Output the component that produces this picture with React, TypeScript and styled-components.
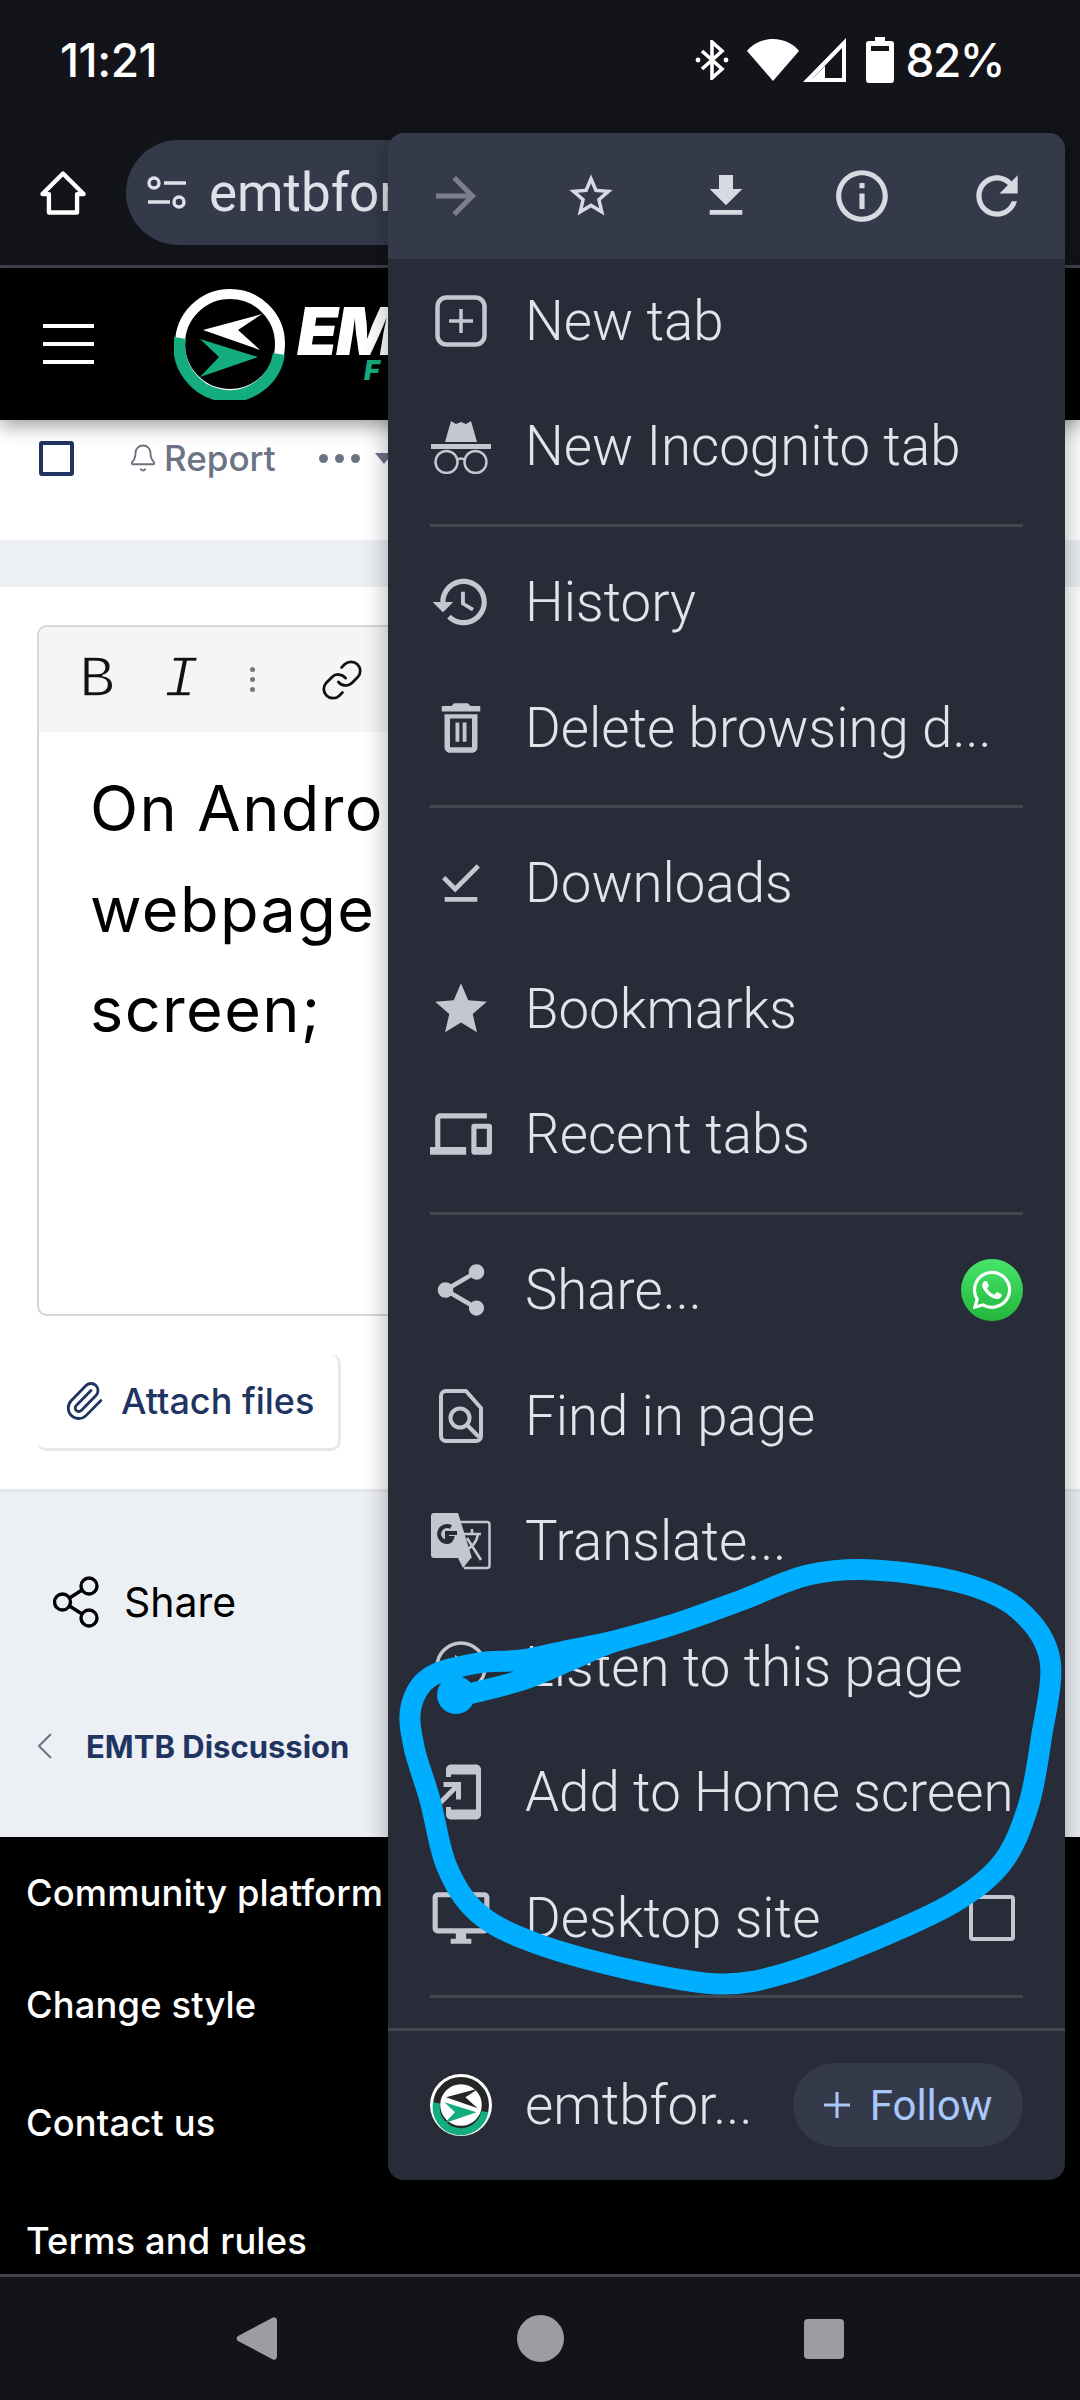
import React from "react";
import styled, { createGlobalStyle } from "styled-components";
import { Bell, Link, Paperclip } from "lucide-react";
import { FaWhatsapp } from "react-icons/fa";

const Global = createGlobalStyle`
  html, body { margin: 0; padding: 0; background: #000; }
  * { box-sizing: border-box; }
`;

const Phone = styled.div`
  position: relative;
  width: 1080px;
  height: 2400px;
  overflow: hidden;
  background: #fff;
  font-family: Inter, "Liberation Sans", sans-serif;
  display: flex;
  flex-direction: column;
`;

const Chrome = styled.header`
  background: #12141a;
  border-bottom: 3px solid #44464f;
  height: 268px;
  flex: none;
`;
const StatusBar = styled.div`
  height: 120px;
  display: flex;
  align-items: center;
  justify-content: space-between;
  padding: 0 76px 0 60px;
  color: #fff;
`;
const Clock = styled.span`
  font-size: 46px;
  font-weight: 500;
  letter-spacing: -0.5px;
`;
const StatusIcons = styled.div`
  display: flex;
  align-items: center;
`;
const Battery = styled.span`
  font-size: 46px;
  font-weight: 500;
  letter-spacing: -1.5px;
  margin-left: 12px;
`;
const Toolbar = styled.div`
  height: 145px;
  display: flex;
  align-items: center;
  padding-left: 37px;
  gap: 37px;
`;
const UrlPill = styled.div`
  height: 105px;
  width: 420px;
  border-radius: 53px;
  background: #343a4a;
  display: flex;
  align-items: center;
  padding-left: 21px;
  gap: 22px;
  color: #dfe1e8;
  font-family: Roboto, sans-serif;
  font-size: 53px;
  white-space: nowrap;
`;

const SiteHeader = styled.div`
  height: 152px;
  flex: none;
  background: #000;
  display: flex;
  align-items: center;
  padding-left: 43px;
  position: relative;
  z-index: 2;
  box-shadow: 0 6px 18px rgba(0, 0, 0, 0.38);
`;
const Burger = styled.div`
  width: 51px;
  display: flex;
  flex-direction: column;
  gap: 14px;
  margin-right: 80px;
`;
const BurgerBar = styled.i`
  display: block;
  height: 4px;
  background: #fff;
`;
const Brand = styled.div`
  display: flex;
  flex-direction: column;
  margin-left: 11px;
  font-style: italic;
  font-weight: 900;
  white-space: nowrap;
`;
const BrandMain = styled.span`
  font-size: 66px;
  line-height: 52px;
  color: #fff;
  letter-spacing: -2px;
`;
const BrandSub = styled.span`
  font-size: 27px;
  line-height: 24px;
  color: #14ad7f;
  margin-left: 67px;
  margin-top: 2px;
`;

const Actions = styled.div`
  height: 120px;
  flex: none;
  display: flex;
  align-items: center;
  padding: 0 0 44px 39px;
  color: #6b7385;
  white-space: nowrap;
`;
const Check = styled.span`
  width: 35px;
  height: 35px;
  border: 4px solid #1f3461;
  border-radius: 3px;
  margin-right: 54px;
`;
const Report = styled.span`
  font-size: 35px;
  font-weight: 500;
  margin-left: 6px;
`;
const Dots = styled.span`
  display: flex;
  gap: 7px;
  margin-left: 43px;
`;
const Dot = styled.i`
  display: block;
  width: 9px;
  height: 9px;
  border-radius: 50%;
  background: #6b7385;
`;
const Caret = styled.i`
  margin-left: 15px;
  width: 0;
  height: 0;
  border-left: 9px solid transparent;
  border-right: 9px solid transparent;
  border-top: 11px solid #6b7385;
`;
const Gap = styled.div`
  height: 47px;
  flex: none;
  background: #eceff4;
`;
const ReplyBlock = styled.section`
  height: 905px;
  flex: none;
  background: #fff;
  padding: 38px 0 0 37px;
  border-bottom: 3px solid #e4e6ea;
`;
const Editor = styled.div`
  width: 700px;
  height: 691px;
  border: 2px solid #d6d6d6;
  border-radius: 10px;
  overflow: hidden;
`;
const EditorBar = styled.div`
  height: 105px;
  background: #f5f5f5;
  display: flex;
  align-items: center;
  padding-left: 40px;
  color: #111;
`;
const FormatGlyph = styled.span<{ $italic?: boolean; $w: number }>`
  font-family: "Liberation Mono", monospace;
  font-size: 60px;
  line-height: 1;
  font-style: ${(p) => (p.$italic ? "italic" : "normal")};
  width: ${(p) => p.$w}px;
  -webkit-text-stroke: 1.4px #f5f5f5;
`;
const VDots = styled.span`
  display: flex;
  flex-direction: column;
  gap: 5px;
  margin: 0 65px 0 2px;
`;
const VDot = styled.i`
  display: block;
  width: 5px;
  height: 5px;
  border-radius: 50%;
  background: #777;
`;
const EditorText = styled.div`
  padding: 26px 0 0 51px;
  font-size: 63px;
  line-height: 100.5px;
  color: #000;
  white-space: nowrap;
  letter-spacing: 1.4px;
`;
const Attach = styled.div`
  margin-top: 38px;
  width: 304px;
  height: 97px;
  border-right: 3px solid #e8e8e8;
  border-bottom: 3px solid #e8e8e8;
  border-radius: 0 10px 10px 10px;
  display: flex;
  align-items: center;
  padding-left: 26px;
  gap: 16px;
  color: #1f3461;
  font-size: 36px;
  font-weight: 500;
  white-space: nowrap;
`;
const ShareBlock = styled.section`
  height: 345px;
  flex: none;
  background: #eceff4;
  display: flex;
  flex-direction: column;
`;
const ShareRow = styled.div`
  display: flex;
  align-items: center;
  padding: 6px 0 0 53px;
  gap: 25px;
  font-size: 41px;
  color: #000;
  height: 214px;
`;
const Crumb = styled.div`
  display: flex;
  align-items: center;
  padding-left: 38px;
  gap: 34px;
  font-size: 31px;
  font-weight: 700;
  color: #1f3461;
  height: 80px;
  white-space: nowrap;
`;
const FooterList = styled.footer`
  height: 437px;
  flex: none;
  background: #000;
  overflow: hidden;
  padding-left: 26px;
  display: grid;
  grid-template-rows: 112px 112px 124px 112px;
  align-items: center;
  color: #fff;
  font-size: 36.3px;
  letter-spacing: 0.15px;
  font-weight: 500;
  white-space: nowrap;
`;
const NavBar = styled.nav`
  flex: 1;
  background: #12141a;
  border-top: 3px solid #44464f;
  display: flex;
  align-items: center;
  padding-left: 236px;
  gap: 240px;
`;
const NavCircle = styled.i`
  width: 47px;
  height: 47px;
  border-radius: 50%;
  background: #9c9da0;
`;
const NavSquare = styled.i`
  width: 40px;
  height: 40px;
  border-radius: 4px;
  background: #9c9da0;
`;

const Menu = styled.aside`
  position: absolute;
  left: 388px;
  top: 133px;
  width: 677px;
  height: 2047px;
  background: #282c38;
  border-radius: 16px;
  overflow: hidden;
  box-shadow: 0 4px 26px rgba(0, 0, 0, 0.32);
  display: flex;
  flex-direction: column;
  font-family: Roboto, sans-serif;
  color: #e3e4ea;
  z-index: 3;
`;
const MenuTop = styled.div`
  height: 126px;
  flex: none;
  background: #343a4a;
  display: grid;
  grid-template-columns: repeat(5, 1fr);
  align-items: center;
  justify-items: center;
`;
const Row = styled.div`
  height: 125.6px;
  flex: none;
  display: flex;
  align-items: center;
  padding: 0 42px 2px;
  font-size: 54.6px;
  font-weight: 300;
  white-space: nowrap;
`;
const IconSlot = styled.span`
  width: 62px;
  height: 62px;
  flex: none;
  margin-right: 33px;
  display: flex;
  align-items: center;
  justify-content: center;
`;
const RowLabel = styled.span`
  flex: 1;
`;
const Divider = styled.div`
  height: 30px;
  flex: none;
  display: flex;
  align-items: center;
  margin: 0 42px;
  &::after {
    content: "";
    flex: 1;
    height: 3px;
    background: #44474f;
  }
`;
const Whatsapp = styled.span`
  width: 62px;
  height: 62px;
  border-radius: 50%;
  background: linear-gradient(#46e66a, #25b53c);
  color: #fff;
  display: flex;
  align-items: center;
  justify-content: center;
  font-size: 44px;
`;
const Checkbox = styled.span`
  width: 46px;
  height: 46px;
  border: 4px solid #c4c6d0;
  border-radius: 4px;
  margin-right: 8px;
`;
const FooterRow = styled.div`
  flex: 1;
  margin-top: 16px;
  border-top: 3px solid #44474f;
  display: flex;
  align-items: center;
  padding: 0 42px;
  font-size: 54.6px;
  font-weight: 300;
  white-space: nowrap;
`;
const Follow = styled.span`
  height: 84px;
  width: 230px;
  border-radius: 42px;
  background: #343a4a;
  color: #a8c7fa;
  font-size: 42px;
  font-weight: 400;
  display: flex;
  align-items: center;
  justify-content: center;
  gap: 20px;
  flex: none;
`;
const Scribble = styled.svg`
  position: absolute;
  left: 0;
  top: 0;
  z-index: 4;
  pointer-events: none;
`;

const Mat = styled.svg<{ $size: number; $color?: string }>`
  width: ${(p) => p.$size}px;
  height: ${(p) => p.$size}px;
  fill: ${(p) => p.$color ?? "#c4c6d0"};
  display: block;
  flex: none;
`;

const P = {
  forward: "M12 4l-1.41 1.41L16.17 11H4v2h12.17l-5.58 5.59L12 20l8-8z",
  starO: "M22 9.24l-7.19-.62L12 2 9.19 8.63 2 9.24l5.46 4.73L5.82 21 12 17.27 18.18 21l-1.63-7.03L22 9.24zM12 15.4l-3.76 2.27 1-4.28-3.32-2.88 4.38-.38L12 6.1l1.71 4.04 4.38.38-3.32 2.88 1 4.28L12 15.4z",
  download: "M19 9h-4V3H9v6H5l7 7 7-7zM5 18v2h14v-2H5z",
  info: "M11 7h2v2h-2zm0 4h2v6h-2zm1-9C6.48 2 2 6.48 2 12s4.48 10 10 10 10-4.48 10-10S17.52 2 12 2zm0 18c-4.41 0-8-3.59-8-8s3.59-8 8-8 8 3.59 8 8-3.59 8-8 8z",
  refresh: "M17.65 6.35C16.2 4.9 14.21 4 12 4c-4.42 0-7.99 3.58-7.99 8s3.57 8 7.99 8c3.73 0 6.84-2.55 7.73-6h-2.08c-.82 2.33-3.04 4-5.65 4-3.31 0-6-2.69-6-6s2.69-6 6-6c1.66 0 3.14.69 4.22 1.78L13 11h7V4l-2.35 2.35z",
  history: "M13 3c-4.97 0-9 4.03-9 9H1l3.89 3.89.07.14L9 12H6c0-3.87 3.13-7 7-7s7 3.13 7 7-3.13 7-7 7c-1.93 0-3.68-.79-4.94-2.06l-1.42 1.42C8.27 19.99 10.51 21 13 21c4.97 0 9-4.03 9-9s-4.03-9-9-9zm-1 5v5l4.28 2.54.72-1.21-3.5-2.08V8H12z",
  trash: "M16 8.5V19H8V8.5h8M14.5 3h-5l-1 1H5v2h14V4h-3.5l-1-1zM18 7H6v12c0 1.1.9 2 2 2h8c1.1 0 2-.9 2-2V7zM10 10h1.4v7H10zM12.6 10H14v7h-1.4z",
  done: "M20.13 5.41 18.72 4l-9.19 9.19-4.25-4.24-1.41 1.41 5.66 5.66L20.13 5.41zM5 18h14v2H5z",
  star: "M12 17.27L18.18 21l-1.64-7.03L22 9.24l-7.19-.61L12 2 9.19 8.63 2 9.24l5.46 4.73L5.82 21z",
  devices: "M4 6h18V4H4c-1.1 0-2 .9-2 2v11H0v3h14v-3H4V6zm19 2h-6c-.55 0-1 .45-1 1v10c0 .55.45 1 1 1h6c.55 0 1-.45 1-1V9c0-.55-.45-1-1-1zm-1 9h-4v-7h4v7z",
  share: "M18 16.08c-.76 0-1.44.3-1.96.77L8.91 12.7c.05-.23.09-.46.09-.7s-.04-.47-.09-.7l7.05-4.11c.54.5 1.25.81 2.04.81 1.66 0 3-1.34 3-3s-1.34-3-3-3-3 1.34-3 3c0 .24.04.47.09.7L8.04 9.81C7.5 9.31 6.79 9 6 9c-1.66 0-3 1.34-3 3s1.34 3 3 3c.79 0 1.5-.31 2.04-.81l7.12 4.16c-.05.21-.08.43-.08.65 0 1.61 1.31 2.92 2.92 2.92 1.61 0 2.92-1.31 2.92-2.92s-1.31-2.92-2.92-2.92z",
  addHome: "M18 1.01 8 1c-1.1 0-2 .9-2 2v3h2V5h10v14H8v-1H6v3c0 1.1.9 2 2 2h10c1.1 0 2-.9 2-2V3c0-1.1-.9-1.99-2-1.99zM10 15h2V8H5v2h3.59L3 15.59 4.41 17 10 11.41V15z",
  desktop: "M21 2H3c-1.1 0-2 .9-2 2v12c0 1.1.9 2 2 2h7v2H8v2h8v-2h-2v-2h7c1.1 0 2-.9 2-2V4c0-1.1-.9-2-2-2zm0 14H3V4h18v12z",
};

const Icon = ({ d, size = 56, color }: { d: string; size?: number; color?: string }) => (
  <Mat viewBox="0 0 24 24" $size={size} $color={color}>
    <path d={d} />
  </Mat>
);

const NewTabIcon = () => (
  <svg width="52" height="52" viewBox="0 0 52 52" fill="none" stroke="#c4c6d0">
    <rect x="2.5" y="2.5" width="47" height="47" rx="9" strokeWidth="4.5" />
    <path d="M26 14v24M14 26h24" strokeWidth="3.5" />
  </svg>
);
const IncognitoIcon = () => (
  <svg width="60" height="56" viewBox="0 0 60 56" fill="#c4c6d0">
    <path d="M14 24 L20 3 L25 6 L30 4 L35 6 L40 3 L46 24 Z" />
    <rect x="0" y="26" width="60" height="5" />
    <g fill="none" stroke="#c4c6d0" strokeWidth="2.5">
      <circle cx="15.5" cy="44" r="11" />
      <circle cx="44.5" cy="44" r="11" />
      <path d="M26 42q4-3 8 0" />
    </g>
  </svg>
);
const FindIcon = () => (
  <svg width="44" height="54" viewBox="0 0 44 54" fill="none" stroke="#c4c6d0" strokeWidth="4">
    <path d="M7 2h20l15 17v28a5 5 0 0 1-5 5H7a5 5 0 0 1-5-5V7a5 5 0 0 1 5-5z" strokeLinejoin="round" />
    <circle cx="21" cy="29" r="9.5" />
    <path d="M28 36l12 12" />
  </svg>
);
const TranslateIcon = () => (
  <svg width="60" height="58" viewBox="0 0 60 58" fill="none">
    <path d="M23 10h33a2.5 2.5 0 0 1 2.5 2.5v41a2.5 2.5 0 0 1-2.5 2.5H33" stroke="#c4c6d0" strokeWidth="2.5" />
    <path d="M3 1h24l14 45H3a3 3 0 0 1-3-3V4a3 3 0 0 1 3-3z" fill="#c4c6d0" />
    <path d="M27 46l5 10 8-10z" fill="#c4c6d0" />
    <path d="M26 21H16v5h5c-1 3-3 4-5 4a8 8 0 1 1 4-15" stroke="#282c38" strokeWidth="4" />
    <path d="M32 22h18M41 17v5M47 22c-1 8-7 14-14 17M36 26l14 22" stroke="#c4c6d0" strokeWidth="2.6" />
  </svg>
);
const ListenIcon = () => (
  <svg width="52" height="52" viewBox="0 0 52 52" fill="none">
    <circle cx="26" cy="26" r="24" stroke="#c4c6d0" strokeWidth="3.5" />
    <path d="M20 14l18 12-18 12z" fill="#c4c6d0" />
  </svg>
);
const BrandMark = ({ size, dark }: { size: number; dark?: boolean }) => {
  const ink = dark ? "#262626" : "#fff";
  const green = "#14ad7f";
  return (
    <svg width={size} height={size} viewBox="0 0 112 112" style={{ flex: "none" }}>
      {dark && <circle cx="56" cy="56" r="56" fill="#fff" />}
      <circle cx="56" cy="56" r={dark ? 44 : 50} fill="none" stroke={ink} strokeWidth={dark ? 13 : 10} />
      <path
        d={dark ? "M99 68A44 44 0 0 1 12 52" : "M105 66A50 50 0 0 1 6 50"}
        fill="none"
        stroke={green}
        strokeWidth={dark ? 13 : 12}
      />
      <path d="M88 26L29 42L86 62L64 42Z" fill={ink} />
      <path d="M26 51L84 69L26 89L45 69Z" fill={green} />
    </svg>
  );
};

type Pt = [number, number];
const loop: Pt[] = [
  [456, 1697], [522, 1680], [575, 1658], [610, 1643], [672, 1625], [742, 1600], [808, 1575], [874, 1570],
  [962, 1583], [1019, 1610], [1050, 1660], [1041, 1740], [1028, 1807], [1002, 1863], [953, 1903],
  [874, 1940], [786, 1973], [720, 1984], [632, 1970], [535, 1943], [478, 1913], [447, 1867],
  [430, 1800], [414, 1747], [411, 1707], [430, 1677], [478, 1663], [522, 1660], [570, 1650], [610, 1642], [672, 1625],
];
const smooth = (pts: Pt[]) => {
  let d = `M${pts[0][0]} ${pts[0][1]}`;
  for (let i = 0; i < pts.length - 1; i++) {
    const a = pts[Math.max(i - 1, 0)];
    const b = pts[i];
    const c = pts[i + 1];
    const e = pts[Math.min(i + 2, pts.length - 1)];
    d += `C${b[0] + (c[0] - a[0]) / 6} ${b[1] + (c[1] - a[1]) / 6} ${c[0] - (e[0] - b[0]) / 6} ${c[1] - (e[1] - b[1]) / 6} ${c[0]} ${c[1]}`;
  }
  return d;
};

const footerLinks = ["Community platform", "Change style", "Contact us", "Terms and rules"];

export default function App() {
  return (
    <Phone>
      <Global />
      <Chrome>
        <StatusBar>
          <Clock>11:21</Clock>
          <StatusIcons>
            <svg width="34" height="40" viewBox="0 0 34 40" fill="none" stroke="#fff" strokeWidth="3.6">
              <path d="M7 11l20 18-10 9V2l10 9L7 29" />
              <circle cx="3" cy="20" r="2.4" fill="#fff" stroke="none" />
              <circle cx="31" cy="20" r="2.4" fill="#fff" stroke="none" />
            </svg>
            <svg width="54" height="44" viewBox="0 0 54 44" fill="#fff" style={{ marginLeft: 17 }}>
              <path d="M27 43L1 13C6 6 16 1 27 1s21 5 26 12z" />
            </svg>
            <svg width="44" height="44" viewBox="0 0 44 44" style={{ marginLeft: 3 }}>
              <path fillRule="evenodd" d="M43 0V44H0zM39 10L10 40H39z" fill="#fff" />
              <path d="M10 40L22 28V40z" fill="#fff" />
            </svg>
            <svg width="28" height="46" viewBox="0 0 28 46" style={{ marginLeft: 19 }}>
              <path fillRule="evenodd" d="M9 0h10v4h6a3 3 0 0 1 3 3v36a3 3 0 0 1-3 3H3a3 3 0 0 1-3-3V7a3 3 0 0 1 3-3h6zM5 9v5h18V9z" fill="#fff" />
            </svg>
            <Battery>82%</Battery>
          </StatusIcons>
        </StatusBar>
        <Toolbar>
          <svg width="52" height="52" viewBox="0 0 24 24" fill="none" stroke="#fff" strokeWidth="2" strokeLinejoin="round">
            <path d="M12 3L2.5 12.5H5.5V21H18.5V12.5H21.5Z" />
          </svg>
          <UrlPill>
            <svg width="40" height="36" viewBox="0 0 40 36" fill="none" stroke="#dfe1e8" strokeWidth="3.4" style={{ flex: "none" }}>
              <circle cx="7" cy="8" r="5" />
              <path d="M17 8h22M1 27h22" />
              <circle cx="32" cy="27" r="5" />
            </svg>
            emtbfor
          </UrlPill>
        </Toolbar>
      </Chrome>

      <SiteHeader>
        <Burger>
          <BurgerBar />
          <BurgerBar />
          <BurgerBar />
        </Burger>
        <BrandMark size={112} />
        <Brand>
          <BrandMain>EM</BrandMain>
          <BrandSub>F</BrandSub>
        </Brand>
      </SiteHeader>

      <Actions>
        <Check />
        <Bell size={30} strokeWidth={1.5} />
        <Report>Report</Report>
        <Dots>
          <Dot />
          <Dot />
          <Dot />
        </Dots>
        <Caret />
      </Actions>
      <Gap />

      <ReplyBlock>
        <Editor>
          <EditorBar>
            <FormatGlyph $w={84}>B</FormatGlyph>
            <FormatGlyph $italic $w={85}>I</FormatGlyph>
            <VDots>
              <VDot />
              <VDot />
              <VDot />
            </VDots>
            <Link size={44} strokeWidth={1.5} color="#111" />
          </EditorBar>
          <EditorText>
            On Andro
            <br />
            webpage
            <br />
            screen;
          </EditorText>
        </Editor>
        <Attach>
          <Paperclip size={42} strokeWidth={1.6} />
          Attach files
        </Attach>
      </ReplyBlock>

      <ShareBlock>
        <ShareRow>
          <svg width="46" height="52" viewBox="0 0 46 52" fill="none" stroke="#000" strokeWidth="3.4">
            <circle cx="36" cy="10" r="8" />
            <circle cx="9.5" cy="26" r="8" />
            <circle cx="36" cy="42" r="8" />
            <path d="M16.5 22L29 14M16.5 30L29 38" />
          </svg>
          Share
        </ShareRow>
        <Crumb>
          <svg width="14" height="26" viewBox="0 0 14 26" fill="none" stroke="#6b7385" strokeWidth="2">
            <path d="M13 1L1 13l12 12" />
          </svg>
          EMTB Discussion
        </Crumb>
      </ShareBlock>

      <FooterList>
        {footerLinks.map((l) => (
          <span key={l}>{l}</span>
        ))}
      </FooterList>

      <NavBar>
        <svg width="41" height="45" viewBox="0 0 41 45" fill="#9c9da0">
          <path d="M37 1.5a3 3 0 0 1 4 2.7v36.6a3 3 0 0 1-4 2.7L2 25a3 3 0 0 1 0-5z" />
        </svg>
        <NavCircle />
        <NavSquare />
      </NavBar>

      <Menu>
        <MenuTop>
          <Icon d={P.forward} size={60} color="#7b7f8b" />
          <Icon d={P.starO} size={52} color="#d8dae2" />
          <Icon d={P.download} size={56} color="#d8dae2" />
          <Icon d={P.info} size={62} color="#d8dae2" />
          <Icon d={P.refresh} size={62} color="#d8dae2" />
        </MenuTop>
        <Row><IconSlot><NewTabIcon /></IconSlot><RowLabel>New tab</RowLabel></Row>
        <Row><IconSlot><IncognitoIcon /></IconSlot><RowLabel>New Incognito tab</RowLabel></Row>
        <Divider />
        <Row><IconSlot><Icon d={P.history} size={62} /></IconSlot><RowLabel>History</RowLabel></Row>
        <Row><IconSlot><Icon d={P.trash} size={66} /></IconSlot><RowLabel>Delete browsing d...</RowLabel></Row>
        <Divider />
        <Row><IconSlot><Icon d={P.done} size={56} /></IconSlot><RowLabel>Downloads</RowLabel></Row>
        <Row><IconSlot><Icon d={P.star} size={62} /></IconSlot><RowLabel>Bookmarks</RowLabel></Row>
        <Row><IconSlot><Icon d={P.devices} size={62} /></IconSlot><RowLabel>Recent tabs</RowLabel></Row>
        <Divider />
        <Row>
          <IconSlot><Icon d={P.share} size={62} /></IconSlot>
          <RowLabel>Share...</RowLabel>
          <Whatsapp><FaWhatsapp /></Whatsapp>
        </Row>
        <Row><IconSlot><FindIcon /></IconSlot><RowLabel>Find in page</RowLabel></Row>
        <Row><IconSlot><TranslateIcon /></IconSlot><RowLabel>Translate...</RowLabel></Row>
        <Row><IconSlot><ListenIcon /></IconSlot><RowLabel>Listen to this page</RowLabel></Row>
        <Row><IconSlot><Icon d={P.addHome} size={60} /></IconSlot><RowLabel>Add to Home screen</RowLabel></Row>
        <Row>
          <IconSlot><Icon d={P.desktop} size={62} /></IconSlot>
          <RowLabel>Desktop site</RowLabel>
          <Checkbox />
        </Row>
        <Divider />
        <FooterRow>
          <IconSlot><BrandMark size={62} dark /></IconSlot>
          <RowLabel>emtbfor...</RowLabel>
          <Follow>
            <svg width="26" height="26" viewBox="0 0 26 26" stroke="#a8c7fa" strokeWidth="3">
              <path d="M13 0v26M0 13h26" />
            </svg>
            Follow
          </Follow>
        </FooterRow>
      </Menu>

      <Scribble width="1080" height="2400" viewBox="0 0 1080 2400" fill="none">
        <path d={smooth(loop)} stroke="#00aeff" strokeWidth="21" strokeLinecap="round" strokeLinejoin="round" />
        <circle cx="456" cy="1695" r="19" fill="#00aeff" />
      </Scribble>
    </Phone>
  );
}
